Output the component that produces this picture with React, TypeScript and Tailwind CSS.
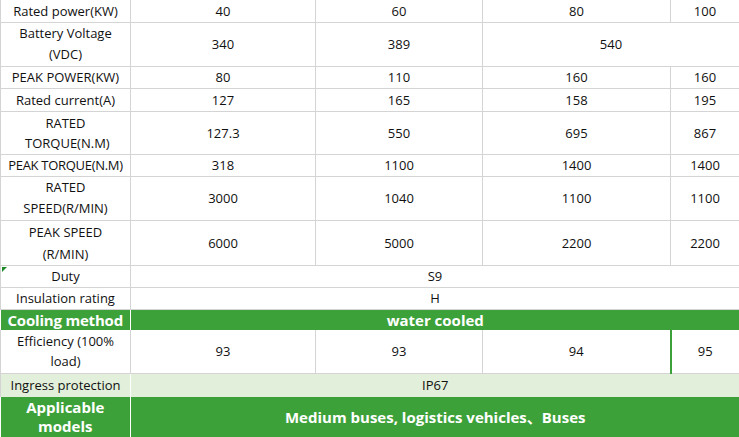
const font = { fontFamily: '"Open Sans", "Noto Sans", "Noto Sans CJK SC", sans-serif' }

type Cell = { text: string; span?: number }
type Row = { h: string; label: string; labelClass?: string; cells: Cell[] }

const rows: Row[] = [
  { h: 'h-[22px]', label: 'Rated power(KW)', cells: [{ text: '40' }, { text: '60' }, { text: '80' }, { text: '100' }] },
  { h: 'h-[44px]', label: 'Battery Voltage (VDC)', labelClass: 'px-1 leading-[21px]', cells: [{ text: '340' }, { text: '389' }, { text: '540', span: 2 }] },
  { h: 'h-[22px]', label: 'PEAK POWER(KW)', cells: [{ text: '80' }, { text: '110' }, { text: '160' }, { text: '160' }] },
  { h: 'h-[23px]', label: 'Rated current(A)', cells: [{ text: '127' }, { text: '165' }, { text: '158' }, { text: '195' }] },
  { h: 'h-[43px]', label: 'RATED TORQUE(N.M)', labelClass: 'px-6 leading-[20px]', cells: [{ text: '127.3' }, { text: '550' }, { text: '695' }, { text: '867' }] },
  { h: 'h-[22px]', label: 'PEAK TORQUE(N.M)', labelClass: 'tracking-[-0.3px]', cells: [{ text: '318' }, { text: '1100' }, { text: '1400' }, { text: '1400' }] },
  { h: 'h-[44px]', label: 'RATED SPEED(R/MIN)', labelClass: 'px-4 leading-[21px]', cells: [{ text: '3000' }, { text: '1040' }, { text: '1100' }, { text: '1100' }] },
  { h: 'h-[45px]', label: 'PEAK SPEED (R/MIN)', labelClass: 'px-6 leading-[22px]', cells: [{ text: '6000' }, { text: '5000' }, { text: '2200' }, { text: '2200' }] },
]

const cell = 'border border-[#d4d4d4] border-t-0 text-center p-0 leading-[20px]'

export default function App() {
  return (
    <div className="w-[739px] h-[437px] overflow-hidden bg-white text-[13px] text-[#111]" style={font}>
      <table className="w-[739px] table-fixed border-collapse">
        <colgroup>
          <col className="w-[130px]" />
          <col className="w-[185px]" />
          <col className="w-[167px]" />
          <col className="w-[188px]" />
          <col className="w-[69px]" />
        </colgroup>
        <tbody>
          {rows.map((r) => (
            <tr key={r.label} className={r.h}>
              <td className={`${cell} ${r.labelClass ?? 'px-1'}`}>{r.label}</td>
              {r.cells.map((c, i) => (
                <td key={i} colSpan={c.span} className={cell}>
                  {c.text}
                </td>
              ))}
            </tr>
          ))}

          {/* Duty */}
          <tr className="h-[22px]">
            <td className={`relative ${cell}`}>
              <span className="absolute left-[1px] top-[1px] w-0 h-0 border-t-[5px] border-r-[5px] border-t-[#1f8a2a] border-r-transparent" />
              Duty
            </td>
            <td colSpan={4} className={cell}>S9</td>
          </tr>

          {/* Insulation */}
          <tr className="h-[22px]">
            <td className={cell}>Insulation rating</td>
            <td colSpan={4} className={cell}>H</td>
          </tr>

          {/* Cooling */}
          <tr className="h-[21px] bg-[#3da13a] text-white font-bold text-[15px]">
            <td className="border-r border-r-white text-center leading-[20px] p-0 tracking-[-0.2px]">Cooling method</td>
            <td colSpan={4} className="text-center leading-[20px] p-0">water cooled</td>
          </tr>

          {/* Efficiency */}
          <tr className="h-[43px]">
            <td className={`${cell} px-2`}>Efficiency (100% load)</td>
            <td className={cell}>93</td>
            <td className={cell}>93</td>
            <td className={`${cell} border-r-2 border-r-[#3da13a]`}>94</td>
            <td className={`${cell} border-l-2 border-l-[#3da13a]`}>95</td>
          </tr>

          {/* Ingress */}
          <tr className="h-[24px] bg-[#e2efda]">
            <td className="border-l border-l-[#d4d4d4] border-r border-r-white text-center leading-[20px] p-0">Ingress protection</td>
            <td colSpan={4} className="text-center leading-[20px] p-0">IP67</td>
          </tr>

          {/* Applicable */}
          <tr className="h-[40px] bg-[#3da13a] text-white font-bold text-[15px]">
            <td className="border-r border-r-white text-center leading-[19px] p-0 px-4">Applicable models</td>
            <td colSpan={4} className="text-center leading-[20px] p-0">Medium buses, logistics vehicles、Buses</td>
          </tr>
        </tbody>
      </table>
    </div>
  )
}
